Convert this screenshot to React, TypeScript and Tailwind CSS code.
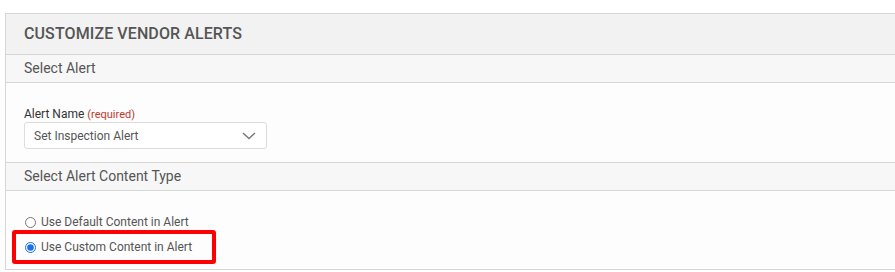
import React from "react";

export default function App() {
  return (
    <div className="w-[895px] h-[272px] bg-white overflow-hidden pt-[13px] pl-[5px] font-['Roboto',sans-serif]">
      <div className="border-l border-t border-[#d6d6d6] w-[900px]">
        {/* Panel title */}
        <div className="h-[41px] bg-[#f2f2f2] border-b border-[#d6d6d6] flex items-center pl-[18px]">
          <h2 className="text-[16px] font-medium text-[#555] tracking-[0.1px]">CUSTOMIZE VENDOR ALERTS</h2>
        </div>

        {/* Select alert */}
        <div className="h-[28px] bg-[#f7f7f7] border-b border-[#d3d9d9] flex items-center pl-[18px]">
          <span className="text-[14px] text-[#555]">Select Alert</span>
        </div>
        <div className="h-[80px] bg-[#fdfdfd] border-b border-[#d6d6d6] pl-[18px] pt-[24px]">
          <label className="block text-[12px] leading-[14px] text-[#333]">
            Alert Name <span className="text-[11px] text-[#c0392b]">(required)</span>
          </label>
          <div className="w-[243px] h-[27px] border border-[#dcdcdc] rounded-[3px] bg-white flex items-center justify-between pl-[9px] pr-[10px]">
            <span className="text-[12px] text-[#555]">Set Inspection Alert</span>
            <svg width="14" height="8" viewBox="0 0 14 8" fill="none">
              <path d="M1 1l6 5.5L13 1" stroke="#777" strokeWidth="1.4" />
            </svg>
          </div>
        </div>

        {/* Content type */}
        <div className="h-[28px] bg-[#f7f7f7] border-b border-[#d3d9d9] flex items-center pl-[18px]">
          <span className="text-[14px] text-[#555]">Select Alert Content Type</span>
        </div>
        <div className="h-[79px] bg-[#fdfdfd] border-b border-[#d6d6d6] pl-[6px] pt-[24px]">
          <label className="flex items-center gap-[5px] pl-[13px] h-[14px]">
            <input type="radio" name="ct" className="w-[11px] h-[11px] m-0 accent-[#1a73e8]" />
            <span className="text-[12px] text-[#555]">Use Default Content in Alert</span>
          </label>
          <div className="mt-[1px] w-[204px] h-[34px] border-[4px] border-[#ff0000] rounded-[3px] flex items-center pl-[9px]">
            <label className="flex items-center gap-[5px]">
              <input type="radio" name="ct" defaultChecked className="w-[11px] h-[11px] m-0 accent-[#1a73e8]" />
              <span className="text-[12px] text-[#555]">Use Custom Content in Alert</span>
            </label>
          </div>
        </div>
      </div>
    </div>
  );
}
